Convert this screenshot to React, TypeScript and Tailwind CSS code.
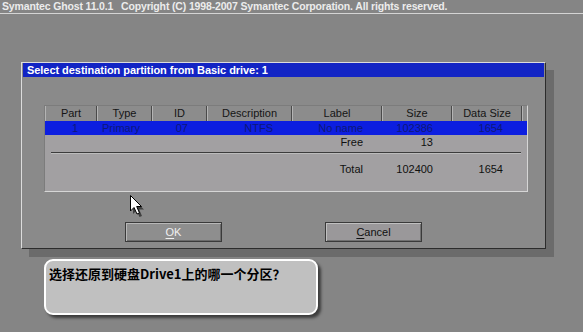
import React from "react";

const cols = [
        { title: "Part", w: "w-[52px]" },
        { title: "Type", w: "w-[55px]" },
        { title: "ID", w: "w-[55px]" },
        { title: "Description", w: "w-[85px]" },
        { title: "Label", w: "w-[90px]" },
        { title: "Size", w: "w-[70px]" },
        { title: "Data Size", w: "w-[70px]" },
];

function Cell({ w, children, left }: { w: string; children?: React.ReactNode; left?: boolean }) {
        return (
                <div className={`${w} shrink-0 ${left ? "text-left pl-[5px]" : "text-right pr-[19px]"}`}>{children}</div>
        );
}

function Cursor() {
        return (
                <svg className="absolute left-[129px] top-[194px]" width="16" height="24" viewBox="0 0 16 24">
                        <path d="M2.5 3.5 L2.5 19 L6 15.5 L9 22 L11.5 21 L8.7 14.5 L13.5 14.5 Z" fill="#404040" transform="translate(1.5 1)" />
                        <path d="M1.5 1.5 L1.5 17 L5 13.5 L8 20 L10.5 19 L7.7 12.5 L12.5 12.5 Z" fill="#ffffff" stroke="#000" strokeWidth="1" strokeLinejoin="miter" />
                </svg>
        );
}

export default function App() {
        return (
                <div className="w-[583px] h-[332px] bg-[#858585] relative overflow-hidden flex flex-col font-['Liberation_Sans',sans-serif]">
                        <div className="h-[13px] flex items-center pl-[2px] text-[10.5px] font-bold text-[#ececec] leading-none tracking-[-0.15px] whitespace-nowrap">
                                <span className="w-[119px] shrink-0">Symantec Ghost 11.0.1</span>
                                <span>Copyright (C) 1998-2007 Symantec Corporation. All rights reserved.</span>
                        </div>
                        <div className="h-px bg-[#d4d4d4]" />

                        <div className="ml-[21px] mt-[48px] w-[525px] h-[187px] bg-[#8a8a8a] border-t border-l border-[#dcdcdc] border-r border-b border-r-[#2c2c2c] border-b-[#2c2c2c] shadow-[8px_8px_0_#6b6b6b] flex flex-col">
                                <div className="h-[14px] mx-px bg-[#1224c4] text-white font-bold text-[11px] leading-[14px] pl-[4px] tracking-[-0.05px]">
                                        Select destination partition from Basic drive: 1
                                </div>
                                <div className="ml-[22px] mt-[28px] w-[484px] h-[87px] bg-[#a2a0a2] border-t border-l border-[#7c7c7c] border-r border-b border-r-[#d6d6d6] border-b-[#d6d6d6] flex flex-col text-[11px] leading-none">
                                        <div className="h-[15px] flex">
                                                {cols.map((c) => (
                                                        <div key={c.title} className={`${c.w} shrink-0 bg-[#8c8c8c] border-l border-[#b4b4b4] border-r border-r-[#4a4a4a] flex items-center justify-center text-[#151515]`}>
                                                                {c.title}
                                                        </div>
                                                ))}
                                                <div className="w-[5px] bg-[#8c8c8c] border-l border-[#b4b4b4]" />
                                        </div>
                                        <div className="h-[14px] bg-[#0c1ee0] flex items-center text-[#0c1878]">
                                                <Cell w="w-[52px]">1</Cell>
                                                <Cell w="w-[55px]" left>Primary</Cell>
                                                <Cell w="w-[55px]">07</Cell>
                                                <Cell w="w-[85px]">NTFS</Cell>
                                                <Cell w="w-[90px]">No name</Cell>
                                                <Cell w="w-[70px]">102386</Cell>
                                                <Cell w="w-[70px]">1654</Cell>
                                        </div>
                                        <div className="h-[14px] flex items-center text-[#101010]">
                                                <Cell w="w-[52px]" />
                                                <Cell w="w-[55px]" left />
                                                <Cell w="w-[55px]" />
                                                <Cell w="w-[85px]" />
                                                <Cell w="w-[90px]">Free</Cell>
                                                <Cell w="w-[70px]">13</Cell>
                                                <Cell w="w-[70px]" />
                                        </div>
                                        <div className="mx-[6px] mt-[3px] h-px bg-[#3c3c3c] border-b border-[#bcbcbc] box-content" />
                                        <div className="mt-[8px] h-[14px] flex items-center text-[#101010]">
                                                <Cell w="w-[52px]" />
                                                <Cell w="w-[55px]" left />
                                                <Cell w="w-[55px]" />
                                                <Cell w="w-[85px]" />
                                                <Cell w="w-[90px]">Total</Cell>
                                                <Cell w="w-[70px]">102400</Cell>
                                                <Cell w="w-[70px]">1654</Cell>
                                        </div>
                                </div>
                                <div className="mt-[30px] ml-[103px] flex gap-[103px] text-[11px]">
                                        <button className="w-[97px] h-[20px] border border-[#3a3a3a] bg-[#8e8e8e] shadow-[inset_1px_1px_0_#b8b8b8,inset_-1px_-1px_0_#6a6a6a] text-[#f0f0f0] leading-none">
                                                <span className="underline underline-offset-2">O</span>K
                                        </button>
                                        <button className="w-[97px] h-[20px] border border-[#3a3a3a] bg-[#9a989a] shadow-[inset_1px_1px_0_#c0c0c0,inset_-1px_-1px_0_#707070] text-[#101010] leading-none">
                                                <span className="underline underline-offset-2">C</span>ancel
                                        </button>
                                </div>
                        </div>

                        <Cursor />

                        <div className="absolute left-[44px] top-[259px] w-[274px] h-[56px] rounded-[9px] border-2 border-white bg-[#c0c0c0] shadow-[3px_3px_3px_rgba(0,0,0,0.55)] pl-[3px] pt-[1px]">
                                <span className="text-[13px] font-bold text-black leading-[16px] font-['Noto_Sans_CJK_SC','Noto_Sans_CJK_JP',sans-serif]">
                                        选择还原到硬盘Drive1上的哪一个分区？
                                </span>
                        </div>
                </div>
        );
}
